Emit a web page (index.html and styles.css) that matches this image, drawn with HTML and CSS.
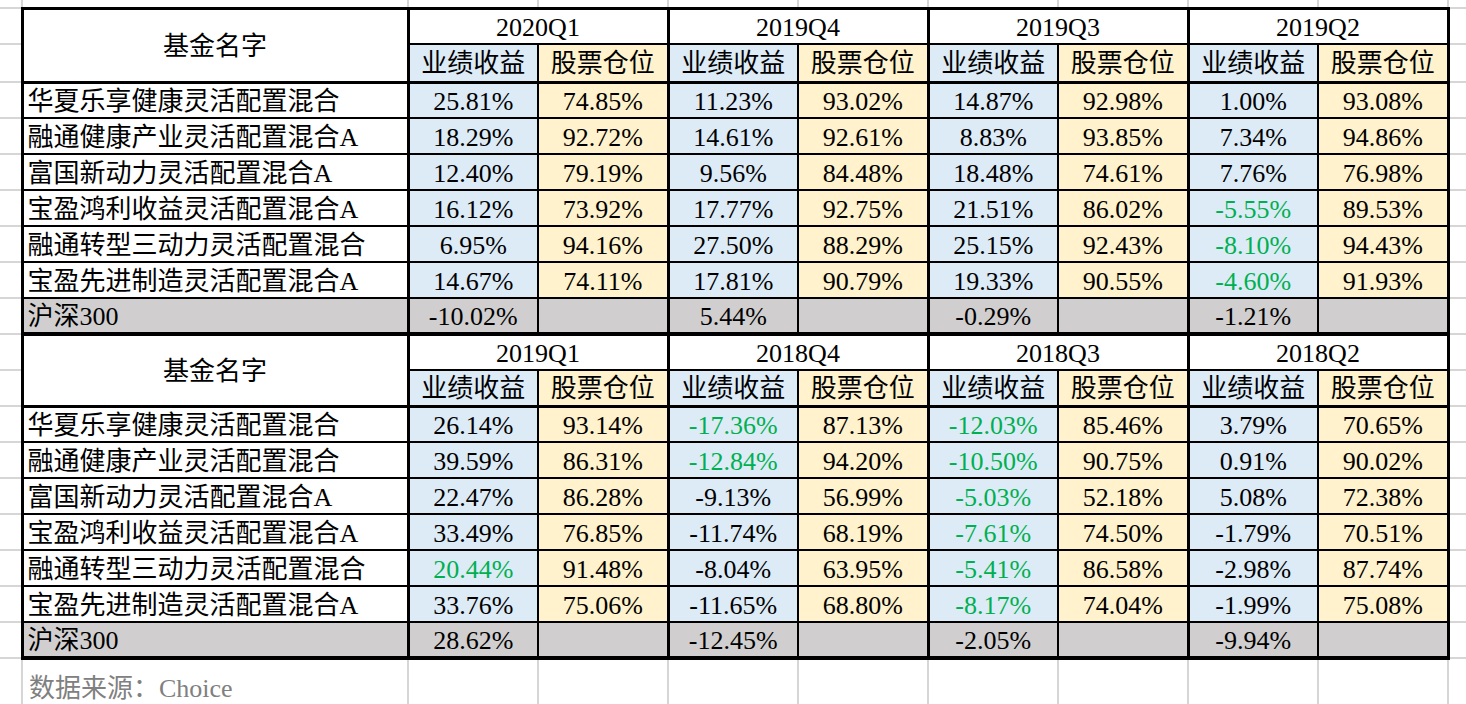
FILE: index.html
```html
<!DOCTYPE html>
<html lang="zh-CN">
<head>
<meta charset="utf-8">
<title>基金业绩与股票仓位</title>
<link rel="stylesheet" href="styles.css">
</head>
<body>
<table class="sheet">
  <colgroup>
    <col class="c-a"><col class="c-b">
    <col class="c-n"><col class="c-n"><col class="c-n"><col class="c-n">
    <col class="c-n"><col class="c-n"><col class="c-n"><col class="c-n">
    <col class="c-k">
  </colgroup>
  <tr class="r-strip">
    <td class="g"></td><td class="g"></td><td class="g"></td><td class="g"></td><td class="g"></td><td class="g"></td><td class="g"></td><td class="g"></td><td class="g"></td><td class="g"></td><td class="g"></td>
  </tr>

  <!-- Table 1 -->
  <tr>
    <td class="g"></td>
    <td class="f hd name-hd top sub" rowspan="2">基金名字</td>
    <td class="f hd top gs" colspan="2">2020Q1</td>
    <td class="f hd top gs" colspan="2">2019Q4</td>
    <td class="f hd top gs" colspan="2">2019Q3</td>
    <td class="f hd top gs ge" colspan="2">2019Q2</td>
    <td class="g"></td>
  </tr>
  <tr class="r-38">
    <td class="g"></td>
    <td class="f hd ret sub gs">业绩收益</td><td class="f hd pos sub">股票仓位</td>
    <td class="f hd ret sub gs">业绩收益</td><td class="f hd pos sub">股票仓位</td>
    <td class="f hd ret sub gs">业绩收益</td><td class="f hd pos sub">股票仓位</td>
    <td class="f hd ret sub gs">业绩收益</td><td class="f hd pos sub ge">股票仓位</td>
    <td class="g"></td>
  </tr>
  <tr>
    <td class="g"></td><td class="f name">华夏乐享健康灵活配置混合</td>
    <td class="f ret gs">25.81%</td><td class="f pos">74.85%</td>
    <td class="f ret gs">11.23%</td><td class="f pos">93.02%</td>
    <td class="f ret gs">14.87%</td><td class="f pos">92.98%</td>
    <td class="f ret gs">1.00%</td><td class="f pos ge">93.08%</td>
    <td class="g"></td>
  </tr>
  <tr>
    <td class="g"></td><td class="f name">融通健康产业灵活配置混合A</td>
    <td class="f ret gs">18.29%</td><td class="f pos">92.72%</td>
    <td class="f ret gs">14.61%</td><td class="f pos">92.61%</td>
    <td class="f ret gs">8.83%</td><td class="f pos">93.85%</td>
    <td class="f ret gs">7.34%</td><td class="f pos ge">94.86%</td>
    <td class="g"></td>
  </tr>
  <tr>
    <td class="g"></td><td class="f name">富国新动力灵活配置混合A</td>
    <td class="f ret gs">12.40%</td><td class="f pos">79.19%</td>
    <td class="f ret gs">9.56%</td><td class="f pos">84.48%</td>
    <td class="f ret gs">18.48%</td><td class="f pos">74.61%</td>
    <td class="f ret gs">7.76%</td><td class="f pos ge">76.98%</td>
    <td class="g"></td>
  </tr>
  <tr>
    <td class="g"></td><td class="f name">宝盈鸿利收益灵活配置混合A</td>
    <td class="f ret gs">16.12%</td><td class="f pos">73.92%</td>
    <td class="f ret gs">17.77%</td><td class="f pos">92.75%</td>
    <td class="f ret gs">21.51%</td><td class="f pos">86.02%</td>
    <td class="f ret gs neg">-5.55%</td><td class="f pos ge">89.53%</td>
    <td class="g"></td>
  </tr>
  <tr>
    <td class="g"></td><td class="f name">融通转型三动力灵活配置混合</td>
    <td class="f ret gs">6.95%</td><td class="f pos">94.16%</td>
    <td class="f ret gs">27.50%</td><td class="f pos">88.29%</td>
    <td class="f ret gs">25.15%</td><td class="f pos">92.43%</td>
    <td class="f ret gs neg">-8.10%</td><td class="f pos ge">94.43%</td>
    <td class="g"></td>
  </tr>
  <tr>
    <td class="g"></td><td class="f name">宝盈先进制造灵活配置混合A</td>
    <td class="f ret gs">14.67%</td><td class="f pos">74.11%</td>
    <td class="f ret gs">17.81%</td><td class="f pos">90.79%</td>
    <td class="f ret gs">19.33%</td><td class="f pos">90.55%</td>
    <td class="f ret gs neg">-4.60%</td><td class="f pos ge">91.93%</td>
    <td class="g"></td>
  </tr>
  <tr>
    <td class="g"></td><td class="f name idx last">沪深300</td>
    <td class="f idx gs last">-10.02%</td><td class="f idx last"></td>
    <td class="f idx gs last">5.44%</td><td class="f idx last"></td>
    <td class="f idx gs last">-0.29%</td><td class="f idx last"></td>
    <td class="f idx gs last">-1.21%</td><td class="f idx ge last"></td>
    <td class="g"></td>
  </tr>

  <!-- Table 2 -->
  <tr>
    <td class="g"></td>
    <td class="f hd name-hd top sub" rowspan="2">基金名字</td>
    <td class="f hd top gs" colspan="2">2019Q1</td>
    <td class="f hd top gs" colspan="2">2018Q4</td>
    <td class="f hd top gs" colspan="2">2018Q3</td>
    <td class="f hd top gs ge" colspan="2">2018Q2</td>
    <td class="g"></td>
  </tr>
  <tr>
    <td class="g"></td>
    <td class="f hd ret sub gs">业绩收益</td><td class="f hd pos sub">股票仓位</td>
    <td class="f hd ret sub gs">业绩收益</td><td class="f hd pos sub">股票仓位</td>
    <td class="f hd ret sub gs">业绩收益</td><td class="f hd pos sub">股票仓位</td>
    <td class="f hd ret sub gs">业绩收益</td><td class="f hd pos sub ge">股票仓位</td>
    <td class="g"></td>
  </tr>
  <tr>
    <td class="g"></td><td class="f name">华夏乐享健康灵活配置混合</td>
    <td class="f ret gs">26.14%</td><td class="f pos">93.14%</td>
    <td class="f ret gs neg">-17.36%</td><td class="f pos">87.13%</td>
    <td class="f ret gs neg">-12.03%</td><td class="f pos">85.46%</td>
    <td class="f ret gs">3.79%</td><td class="f pos ge">70.65%</td>
    <td class="g"></td>
  </tr>
  <tr>
    <td class="g"></td><td class="f name">融通健康产业灵活配置混合</td>
    <td class="f ret gs">39.59%</td><td class="f pos">86.31%</td>
    <td class="f ret gs neg">-12.84%</td><td class="f pos">94.20%</td>
    <td class="f ret gs neg">-10.50%</td><td class="f pos">90.75%</td>
    <td class="f ret gs">0.91%</td><td class="f pos ge">90.02%</td>
    <td class="g"></td>
  </tr>
  <tr>
    <td class="g"></td><td class="f name">富国新动力灵活配置混合A</td>
    <td class="f ret gs">22.47%</td><td class="f pos">86.28%</td>
    <td class="f ret gs">-9.13%</td><td class="f pos">56.99%</td>
    <td class="f ret gs neg">-5.03%</td><td class="f pos">52.18%</td>
    <td class="f ret gs">5.08%</td><td class="f pos ge">72.38%</td>
    <td class="g"></td>
  </tr>
  <tr>
    <td class="g"></td><td class="f name">宝盈鸿利收益灵活配置混合A</td>
    <td class="f ret gs">33.49%</td><td class="f pos">76.85%</td>
    <td class="f ret gs">-11.74%</td><td class="f pos">68.19%</td>
    <td class="f ret gs neg">-7.61%</td><td class="f pos">74.50%</td>
    <td class="f ret gs">-1.79%</td><td class="f pos ge">70.51%</td>
    <td class="g"></td>
  </tr>
  <tr>
    <td class="g"></td><td class="f name">融通转型三动力灵活配置混合</td>
    <td class="f ret gs neg">20.44%</td><td class="f pos">91.48%</td>
    <td class="f ret gs">-8.04%</td><td class="f pos">63.95%</td>
    <td class="f ret gs neg">-5.41%</td><td class="f pos">86.58%</td>
    <td class="f ret gs">-2.98%</td><td class="f pos ge">87.74%</td>
    <td class="g"></td>
  </tr>
  <tr>
    <td class="g"></td><td class="f name">宝盈先进制造灵活配置混合A</td>
    <td class="f ret gs">33.76%</td><td class="f pos">75.06%</td>
    <td class="f ret gs">-11.65%</td><td class="f pos">68.80%</td>
    <td class="f ret gs neg">-8.17%</td><td class="f pos">74.04%</td>
    <td class="f ret gs">-1.99%</td><td class="f pos ge">75.08%</td>
    <td class="g"></td>
  </tr>
  <tr>
    <td class="g"></td><td class="f name idx last">沪深300</td>
    <td class="f idx gs last">28.62%</td><td class="f idx last"></td>
    <td class="f idx gs last">-12.45%</td><td class="f idx last"></td>
    <td class="f idx gs last">-2.05%</td><td class="f idx last"></td>
    <td class="f idx gs last">-9.94%</td><td class="f idx ge last"></td>
    <td class="g"></td>
  </tr>

  <tr class="r-foot">
    <td class="g gf"></td><td class="g gf source">数据来源：Choice</td>
    <td class="g gf"></td><td class="g gf"></td><td class="g gf"></td><td class="g gf"></td>
    <td class="g gf"></td><td class="g gf"></td><td class="g gf"></td><td class="g gf"></td>
    <td class="g gf"></td>
  </tr>
</table>
</body>
</html>
```

FILE: styles.css
```css
html, body {
  margin: 0;
  padding: 0;
  background: #ffffff;
}

body {
  width: 1466px;
  height: 704px;
  overflow: hidden;
  font-family: "Liberation Serif", "Noto Sans CJK SC", serif;
  font-size: 26px;
  color: #000000;
}

.sheet {
  border-collapse: collapse;
  table-layout: fixed;
  width: 1466px;
}

.c-a { width: 22px; }
.c-b { width: 386px; }
.c-n { width: 130px; }
.c-k { width: 18px; }

.sheet tr { height: 36px; }
.sheet tr.r-strip { height: 8px; }
.sheet tr.r-38 { height: 38px; }
.sheet tr.r-foot { height: 46px; }

.sheet td {
  padding: 0;
  line-height: 30px;
  white-space: nowrap;
  overflow: hidden;
  vertical-align: middle;
}

/* spreadsheet gridlines outside the data block */
.sheet .g {
  border: 2px solid #d6d6d6;
  background: #ffffff;
}
.sheet .r-strip .g { border-top: none; }
.sheet tr td.g:first-child { border-left: none; }
.sheet tr td.g:last-child { border-right: none; }
.sheet .gf { border-bottom: none; }

/* data block cells */
.sheet .f {
  border: 2px solid #000000;
  text-align: center;
  background: #ffffff;
  padding-top: 3px;
}
.sheet .hd { background: #ffffff; }
.sheet .ret { background: #ddebf7; }
.sheet .pos { background: #fff2cc; }
.sheet .idx { background: #d0cece; }
.sheet .neg { color: #00b050; }

.sheet .name {
  text-align: left;
  padding-left: 4px;
  border-left: 3px solid #000000;
  border-right: 3px solid #000000;
}
.sheet .name-hd {
  border-left: 3px solid #000000;
  border-right: 3px solid #000000;
}
.sheet .gs { border-left: 3px solid #000000; }
.sheet .ge { border-right: 3px solid #000000; }
.sheet .top { border-top: 3px solid #000000; }
.sheet .sub { border-bottom: 3px solid #000000; }
.sheet .last { border-bottom: 4px solid #000000; }

.sheet .source {
  color: #808080;
  padding-left: 6px;
  padding-top: 14px;
}
```
